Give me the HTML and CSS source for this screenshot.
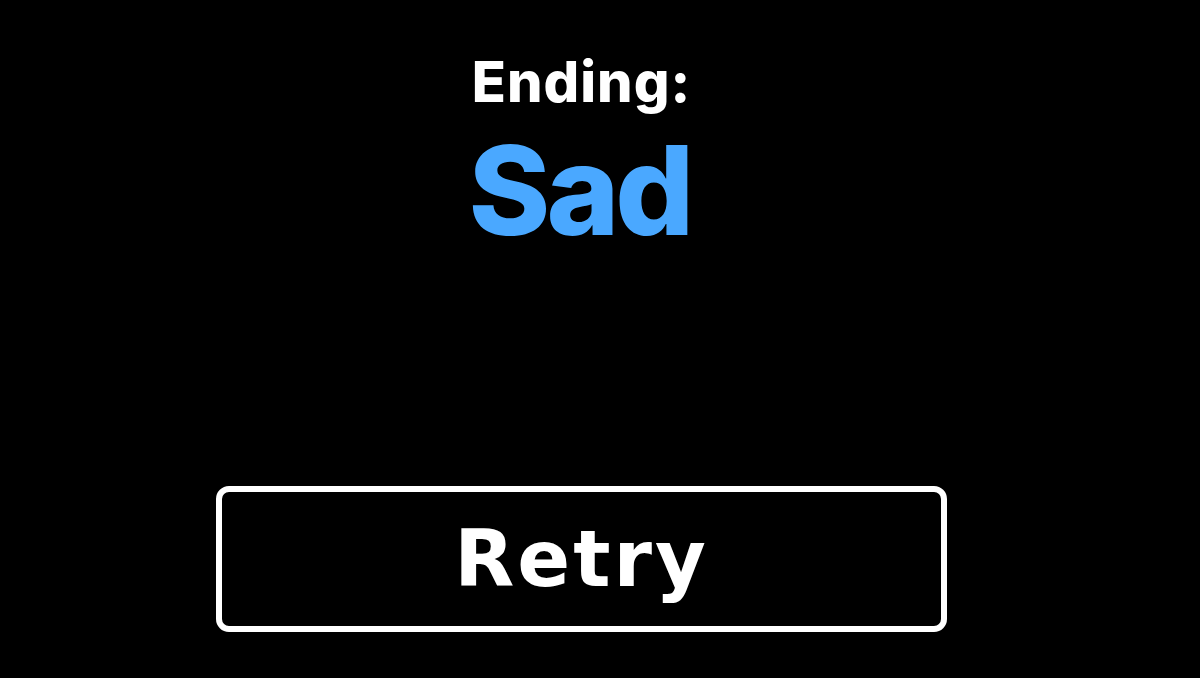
FILE: index.html
```html
<!DOCTYPE html>
<html>
<head>
    <title>Ending</title>
    <link rel="stylesheet" href="styles.css">
</head>
<body>
<div class="screen">
    <div class="result">
        <div class="label">Ending:</div>
        <div class="ending">Sad</div>
    </div>
    <button type="button" class="retry">Retry</button>
</div>
</body>
</html>
```

FILE: styles.css
```css
html, body {
    margin: 0;
    height: 100%;
    background: #000;
}
.screen {
    box-sizing: border-box;
    height: 100%;
    padding: 54px 37px 0 0;
    display: flex;
    flex-direction: column;
    align-items: center;
}
.result {
    display: flex;
    flex-direction: column;
    align-items: center;
}
.label {
    color: #fff;
    font: 800 56px/1 "Inter", sans-serif;
    letter-spacing: 1px;
}
.ending {
    color: #4aa8ff;
    font: 800 124px/1 "Inter", sans-serif;
    letter-spacing: -4px;
    margin: 18px 0 0 -4px;
}
.retry {
    margin-top: 234px;
    width: 731px;
    height: 146px;
    box-sizing: border-box;
    background: #000;
    border: 6px solid #fff;
    border-radius: 13px;
    color: #fff;
    font: 700 78px/1 "DejaVu Sans", sans-serif;
    letter-spacing: 3px;
    padding: 0;
}
```
